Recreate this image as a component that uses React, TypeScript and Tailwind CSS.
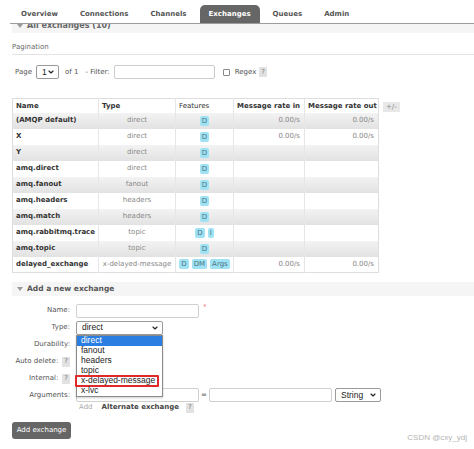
import { ChevronDown } from 'lucide-react'

const tabs = ['Overview', 'Connections', 'Channels', 'Exchanges', 'Queues', 'Admin']

const exchanges = [
  { name: '(AMQP default)', type: 'direct', features: ['D'], rateIn: '0.00/s', rateOut: '0.00/s' },
  { name: 'X', type: 'direct', features: ['D'], rateIn: '0.00/s', rateOut: '0.00/s' },
  { name: 'Y', type: 'direct', features: ['D'] },
  { name: 'amq.direct', type: 'direct', features: ['D'] },
  { name: 'amq.fanout', type: 'fanout', features: ['D'] },
  { name: 'amq.headers', type: 'headers', features: ['D'] },
  { name: 'amq.match', type: 'headers', features: ['D'] },
  { name: 'amq.rabbitmq.trace', type: 'topic', features: ['D', 'I'] },
  { name: 'amq.topic', type: 'topic', features: ['D'] },
  { name: 'delayed_exchange', type: 'x-delayed-message', features: ['D', 'DM', 'Args'], rateIn: '0.00/s', rateOut: '0.00/s' },
]

const typeOptions = ['direct', 'fanout', 'headers', 'topic', 'x-delayed-message', 'x-lvc']

function Help() {
  return <span className="inline-flex h-[10px] items-center bg-[#e2e2e2] px-[2px] text-[7px] leading-none text-[#777]">?</span>
}

function Triangle() {
  return <span className="inline-block h-0 w-0 border-x-[3px] border-t-[4px] border-x-transparent border-t-[#999]" />
}

function FakeSelect({ value, className }: { value: string; className: string }) {
  return (
    <div className={`flex h-[14px] items-center justify-between rounded-[2px] border border-[#9a9a9a] bg-white pl-[5px] pr-[3px] font-['Liberation_Sans',sans-serif] text-[8.5px] text-[#222] ${className}`}>
      <span>{value}</span>
      <ChevronDown size={8} strokeWidth={3.5} className="text-[#222]" />
    </div>
  )
}

export default function App() {
  return (
    <div className="relative h-[449px] w-[474px] overflow-hidden bg-white font-['DejaVu_Sans',sans-serif] text-[7px] text-[#444]">
      {/* Tabs */}
      <div className="relative z-10 pl-[10px] pt-[5px]">
        <div className="flex h-[19px] border-b border-[#9c9c9c]">
          {tabs.map((t) => (
            <div
              key={t}
              className={
                t === 'Exchanges'
                  ? 'mx-[2px] flex items-center rounded-t-[5px] bg-[#666] px-[9px] font-bold text-white'
                  : 'mx-[2px] flex items-center px-[9px] font-bold text-[#555]'
              }
            >
              {t}
            </div>
          ))}
        </div>
      </div>

      {/* All exchanges header (scrolled, clipped under tabs) */}
      <div className="ml-[12px] h-[9px] overflow-hidden bg-[#f5f5f5]">
        <div className="-mt-[5px] flex h-[14px] items-center gap-[4px] pl-[5px] text-[8px] font-bold text-[#666]">
          <Triangle />
          <span>All exchanges (10)</span>
        </div>
      </div>

      <div className="pl-[12px]">
        {/* Pagination */}
        <div className="mt-[10px] border-b border-[#e4e4e4] pb-[2px] leading-[9px] text-[#666]">Pagination</div>

        <div className="ml-[3px] mt-[10px] flex h-[14px] items-center text-[#555]">
          <span>Page</span>
          <FakeSelect value="1" className="ml-[4px] w-[23px] font-['DejaVu_Sans',sans-serif] text-[7px]" />
          <span className="ml-[6px]">of 1</span>
          <span className="ml-[7px]">- Filter:</span>
          <div className="ml-[4px] h-[14px] w-[101px] rounded-[2px] border border-[#ccc]" />
          <div className="ml-[8px] h-[7px] w-[7px] rounded-[1px] border border-[#888]" />
          <span className="ml-[5px]">Regex</span>
          <span className="ml-[3px]">
            <Help />
          </span>
        </div>

        {/* Exchanges table */}
        <div className="mt-[19px] flex items-start gap-[4px]">
          <table className="table-fixed border-collapse border border-[#dedede]">
            <thead>
              <tr className="h-[14px] bg-white text-left text-[#333]">
                <th className="w-[86px] border-r border-[#e6e6e6] pl-[3px] font-bold">Name</th>
                <th className="w-[77px] border-r border-[#e6e6e6] pl-[3px] font-bold">Type</th>
                <th className="w-[58px] border-r border-[#e6e6e6] pl-[3px] font-normal">Features</th>
                <th className="w-[71px] border-r border-[#e6e6e6] pl-[3px] font-bold">Message rate in</th>
                <th className="w-[74px] pl-[3px] font-bold">Message rate out</th>
              </tr>
            </thead>
            <tbody>
              {exchanges.map((ex, i) => (
                <tr
                  key={ex.name}
                  className={i % 2 === 0 ? 'h-[16px] bg-gradient-to-b from-[#f3f3f3] to-[#e2e2e2]' : 'h-[16px] bg-white'}
                >
                  <td className="border-r border-[#e6e6e6] pl-[3px] font-bold text-[#333]">{ex.name}</td>
                  <td className="border-r border-[#e6e6e6] text-center text-[#888]">{ex.type}</td>
                  <td className="border-r border-[#e6e6e6]">
                    <div className="flex justify-center gap-[3px]">
                      {ex.features.map((f) => (
                        <span key={f} className="rounded-[2px] bg-[#9fe2f3] px-[2px] leading-[10px] text-[#4c7482]">
                          {f}
                        </span>
                      ))}
                    </div>
                  </td>
                  <td className="border-r border-[#e6e6e6] pr-[4px] text-right text-[#888]">{ex.rateIn}</td>
                  <td className="pr-[4px] text-right text-[#888]">{ex.rateOut}</td>
                </tr>
              ))}
            </tbody>
          </table>
          <span className="mt-[4px] bg-[#e8e8e8] px-[3px] leading-[10px] text-[#888]">+/-</span>
        </div>
      </div>

      {/* Add a new exchange */}
      <div className="ml-[12px] mt-[9px] flex h-[14px] items-center gap-[4px] bg-[#f5f5f5] pl-[5px] text-[7.5px] font-bold text-[#555]">
        <Triangle />
        <span>Add a new exchange</span>
      </div>

      <div className="ml-[12px] mt-[6px] text-[#555]">
        <div className="flex h-[17px] items-center">
          <div className="w-[58px] text-right">Name:</div>
          <div className="ml-[6px] h-[14px] w-[123px] rounded-[2px] border border-[#d0d0d0]" />
          <span className="ml-[4px] -mt-[6px] text-[#f08080]">*</span>
        </div>

        <div className="flex h-[17px] items-center">
          <div className="w-[58px] text-right">Type:</div>
          <div className="relative z-20 ml-[6px]">
            <FakeSelect value="direct" className="w-[87px]" />
            <div className="absolute left-0 top-[14px] w-[87px] border border-[#8a8a8a] bg-white font-['Liberation_Sans',sans-serif] text-[8.5px] text-[#222] shadow-[0_1px_2px_rgba(0,0,0,0.2)]">
              {typeOptions.map((o) => (
                <div
                  key={o}
                  className={
                    o === 'direct'
                      ? 'flex h-[10px] items-center bg-[#2a7de1] pl-[4px] text-white'
                      : 'relative flex h-[10px] items-center pl-[4px]'
                  }
                >
                  {o}
                  {o === 'x-delayed-message' && (
                    <span className="absolute -bottom-[1px] -left-[2px] -top-[1px] right-[3px] rounded-[1px] border-2 border-[#e02a2a]" />
                  )}
                </div>
              ))}
            </div>
          </div>
        </div>

        <div className="flex h-[17px] items-center">
          <div className="w-[58px] text-right">Durability:</div>
        </div>

        <div className="flex h-[17px] items-center">
          <div className="flex w-[58px] items-center justify-end gap-[4px]">
            <span>Auto delete:</span>
            <Help />
          </div>
        </div>

        <div className="flex h-[17px] items-center">
          <div className="flex w-[58px] items-center justify-end gap-[4px]">
            <span>Internal:</span>
            <Help />
          </div>
        </div>

        <div className="flex h-[16px] items-center">
          <div className="w-[58px] text-right">Arguments:</div>
          <div className="ml-[6px] h-[14px] w-[123px] rounded-[2px] border border-[#d0d0d0]" />
          <span className="w-[10px] text-center">=</span>
          <div className="h-[14px] w-[123px] rounded-[2px] border border-[#d0d0d0]" />
          <FakeSelect value="String" className="ml-[3px] w-[46px]" />
        </div>

        <div className="flex h-[9px] items-center pl-[67px]">
          <span className="text-[#aaa]">Add</span>
          <span className="ml-[9px] font-bold text-[#444]">Alternate exchange</span>
          <span className="ml-[7px]">
            <Help />
          </span>
        </div>

        <button className="mt-[10px] flex h-[17px] w-[59px] items-center justify-center rounded-[3px] bg-[#666] text-[7px] text-white">
          Add exchange
        </button>
      </div>

      <span className="absolute bottom-[5px] right-[7px] font-['Liberation_Sans',sans-serif] text-[8px] text-[#b5b5b5]">
        CSDN @cxy_ydj
      </span>
    </div>
  )
}
